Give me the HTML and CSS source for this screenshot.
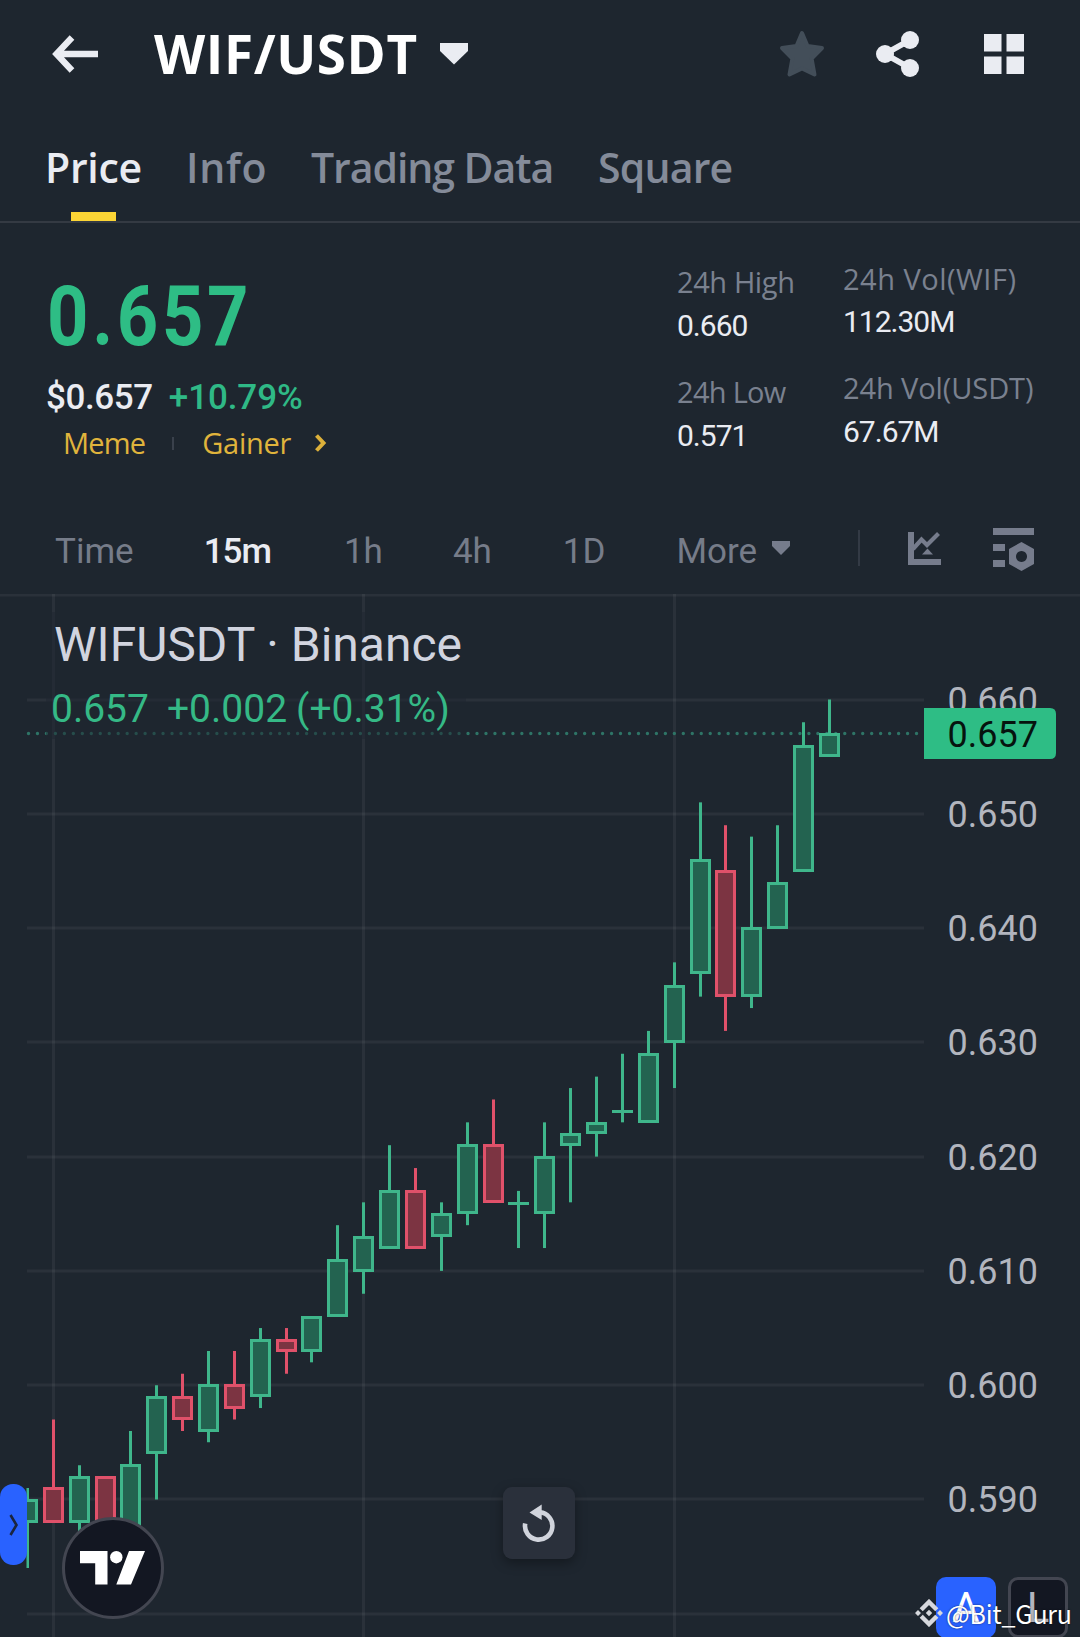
FILE: index.html
```html
<!DOCTYPE html>
<html lang="en">
<head>
  <meta charset="UTF-8"/>
  <meta name="viewport" content="width=device-width, initial-scale=1.0"/>
  <title>WIF/USDT</title>
  <link rel="stylesheet" href="styles.css">
</head>
<body>

  <header>
    <svg class="back" width="48" height="38" viewBox="0 0 48 38">
      <path d="M20 2.5 L4.5 19 L20 35.5 M4 19 H46" fill="none" stroke="#eaecf2" stroke-width="6.4"/>
    </svg>
    <h1>WIF/USDT</h1>
    <svg class="title-caret" width="28" height="22" viewBox="0 0 28 22">
      <path d="M0 0 H28 V8 L14 21.5 L0 8 Z" fill="#eaecf2"/>
    </svg>
    <div class="actions">
      <svg width="46" height="48" viewBox="0 0 46 48">
        <path d="M23 3 L28.5 16 L43 18 L32.6 28.5 L35.5 44.5 L23 38.5 L10.5 44.5 L13.4 28.5 L3 18 L17.5 16 Z" fill="#434e59" stroke="#434e59" stroke-width="4" stroke-linejoin="round"/>
      </svg>
      <svg width="43" height="48" viewBox="0 0 43 48">
        <path d="M34 10 L9 24 L34 38" fill="none" stroke="#eaecf2" stroke-width="6"/>
        <circle cx="34" cy="10" r="9" fill="#eaecf2"/>
        <circle cx="9" cy="24" r="9" fill="#eaecf2"/>
        <circle cx="34" cy="38" r="9" fill="#eaecf2"/>
      </svg>
      <svg width="40" height="40" viewBox="0 0 40 40">
        <path d="M0 0 H17.5 V17.5 H0 Z M22.5 0 H40 V17.5 H22.5 Z M0 22.5 H17.5 V40 H0 Z M22.5 22.5 H40 V40 H22.5 Z" fill="#eaecf2"/>
      </svg>
    </div>
  </header>

  <nav>
    <a class="tab active">Price</a>
    <a class="tab info">Info</a>
    <a class="tab trading">Trading Data</a>
    <a class="tab square">Square</a>
  </nav>

  <!-- Price summary -->
  <section class="summary">
    <div class="quote">
      <div class="last-price">0.657</div>
      <div class="change">
        <span class="usd">$0.657</span>
        <span class="up">+10.79%</span>
      </div>
      <div class="tags">
        <span class="meme">Meme</span>
        <i class="tag-sep"></i>
        <span class="gainer">Gainer</span>
        <svg width="12" height="18" viewBox="0 0 12 18">
          <path d="M1.5 1.5 L8.5 9 L1.5 16.5" fill="none" stroke="#dcb03a" stroke-width="4"/>
        </svg>
      </div>
    </div>
    <div class="stats range">
      <div class="label">24h High</div>
      <div class="value">0.660</div>
      <div class="label low">24h Low</div>
      <div class="value">0.571</div>
    </div>
    <div class="stats volume">
      <div class="label wif">24h Vol(WIF)</div>
      <div class="value base">112.30M</div>
      <div class="label usdt">24h Vol(USDT)</div>
      <div class="value">67.67M</div>
    </div>
  </section>

  <!-- Intervals -->
  <div class="intervals">
    <span>Time</span>
    <span class="active">15m</span>
    <span>1h</span>
    <span>4h</span>
    <span class="day">1D</span>
    <span class="more">More
      <svg width="18" height="14" viewBox="0 0 18 14"><path d="M0 0 H18 V5 L9 14 L0 5 Z" fill="#767c8c"/></svg>
    </span>
    <i class="bar"></i>
    <svg class="chart-icon" width="33" height="33" viewBox="0 0 33 33">
      <path d="M3 0 V30 H33" fill="none" stroke="#767c8c" stroke-width="6"/>
      <path d="M5 17 L13.5 7.5 L19 13 L30.5 1.5" fill="none" stroke="#767c8c" stroke-width="4.2"/>
      <path d="M19.5 16.5 L25 22.5 H14 Z" fill="#767c8c"/>
    </svg>
    <svg class="settings-icon" width="41" height="43" viewBox="0 0 41 43">
      <path d="M0 3.5 H41 M0 19.5 H12 M0 35.5 H12" stroke="#767c8c" stroke-width="7"/>
      <path d="M28.5 14 L41 21 V36 L28.5 43 L16 36 V21 Z M28.5 23 A5.5 5.5 0 1 0 28.51 23 Z" fill="#767c8c" fill-rule="evenodd"/>
    </svg>
  </div>

  <!-- Chart -->
  <div class="chart">
    <svg id="plot" width="1080" height="1043" viewBox="0 594 1080 1043"></svg>

    <div class="legend">
      <div class="symbol">WIFUSDT · Binance</div>
      <div class="legend-values">
        <span>0.657</span><span class="diff">+0.002</span><span class="pct">(+0.31%)</span>
      </div>
    </div>

    <div class="drawer">
      <svg width="10" height="22" viewBox="0 0 10 22"><path d="M1.5 1 L7.5 11 L1.5 21" fill="none" stroke="#1a2540" stroke-width="2.6"/></svg>
    </div>

    <div class="tv-logo">
      <svg width="66" height="34" viewBox="0 0 66 34">
        <path d="M0 0 H27.5 V33.5 H15.2 V12.2 H0 Z M49 0 H65 L51 33.5 H36.3 Z" fill="#fff"/>
        <circle cx="36.3" cy="6.2" r="6.2" fill="#fff"/>
      </svg>
    </div>

    <div class="reset">
      <svg width="34" height="38" viewBox="0 0 34 38">
        <path d="M3.2 19.5 A13.7 13.7 0 1 0 18 8.3" fill="none" stroke="#d1d4dc" stroke-width="4.6"/>
        <path d="M7.5 8.5 L19.7 0.5 V16 Z" fill="#d1d4dc"/>
      </svg>
    </div>

    <div class="scale-buttons">
      <div class="scale auto">A</div>
      <div class="scale log">L</div>
    </div>

    <div class="author">
      <svg width="28" height="28" viewBox="0 0 28 28">
        <path d="M6.2 10.8 L14 3 L21.8 10.8 M6.2 17.2 L14 25 L21.8 17.2" fill="none" stroke="#d6d8dd" stroke-width="4.4"/>
        <path d="M14 10.8 L17.2 14 L14 17.2 L10.8 14 Z M3 11 L6 14 L3 17 L0 14 Z M25 11 L28 14 L25 17 L22 14 Z" fill="#d6d8dd"/>
      </svg>
      <span>@Bit_Guru</span>
    </div>
  </div>

  <script>
    // [high, top of body, bottom of body, low, direction], in thousandths
    const candles = [
      [591, 590, 588, 584, 1], [597, 591, 588, 588, 0], [593, 592, 588, 587, 1], [592, 592, 588, 588, 0],
      [596, 593, 587, 587, 1], [600, 599, 594, 590, 1], [601, 599, 597, 596, 0], [603, 600, 596, 595, 1],
      [603, 600, 598, 597, 0], [605, 604, 599, 598, 1], [605, 604, 603, 601, 0], [606, 606, 603, 602, 1],
      [614, 611, 606, 606, 1], [616, 613, 610, 608, 1], [621, 617, 612, 612, 1], [619, 617, 612, 612, 0],
      [616, 615, 613, 610, 1], [623, 621, 615, 614, 1], [625, 621, 616, 616, 0], [617, 616, 616, 612, 1],
      [623, 620, 615, 612, 1], [626, 622, 621, 616, 1], [627, 623, 622, 620, 1], [629, 624, 624, 623, 1],
      [631, 629, 623, 623, 1], [637, 635, 630, 626, 1], [651, 646, 636, 634, 1], [649, 645, 634, 631, 0],
      [648, 640, 634, 633, 1], [649, 644, 640, 640, 1], [658, 656, 645, 645, 1], [660, 657, 655, 655, 1]
    ];
    const yOf = p => 699.5 + (660 - p) * 11.428;

    let svg = '<defs><clipPath id="area"><rect x="26.5" y="594" width="898" height="1043"/></clipPath></defs>';
    svg += '<rect x="0" y="594" width="1080" height="2.5" class="grid-line"/>';
    [53.5, 363.5, 674.5].forEach(x => {
      svg += `<rect x="${x - 1.5}" y="594" width="3" height="1043" class="grid-line"/>`;
    });
    for (let p = 660; p >= 580; p -= 10) {
      svg += `<rect x="27" y="${Math.round(yOf(p)) - 1.5}" width="897" height="3" class="grid-line"/>`;
    }
    svg += '<line x1="28.5" x2="924" y1="733.5" y2="733.5" class="price-line"/>';

    svg += '<g clip-path="url(#area)">';
    candles.forEach(([high, top, bottom, low, up], i) => {
      const x = Math.round(26.9 + i * 25.87) + 0.5;
      const yTop = Math.round(yOf(top) - 0.7) + 1.5;
      const yBottom = Math.max(yTop, Math.round(yOf(bottom) + 0.7) - 1.5);
      const cls = up ? 'candle-up' : 'candle-down';
      if (high > top) svg += `<line x1="${x}" x2="${x}" y1="${yOf(high)}" y2="${yTop}" class="${cls}"/>`;
      if (low < bottom) svg += `<line x1="${x}" x2="${x}" y1="${yBottom}" y2="${yOf(low)}" class="${cls}"/>`;
      if (top === bottom) {
        svg += `<line x1="${x - 10.5}" x2="${x + 10.5}" y1="${yTop}" y2="${yTop}" class="${cls}"/>`;
      } else {
        svg += `<rect x="${x - 9}" y="${yTop}" width="18" height="${yBottom - yTop}" class="${cls}"/>`;
      }
    });
    svg += '</g>';

    for (let p = 660; p >= 590; p -= 10) {
      svg += `<text x="947.5" y="${yOf(p) + 13}" class="axis">${(p / 1000).toFixed(3)}</text>`;
    }
    svg += '<path d="M924 708 H1050 Q1056 708 1056 714 V753 Q1056 759 1050 759 H924 Z" fill="#2ebd85"/>';
    svg += '<text x="947.5" y="747" class="axis current">0.657</text>';
    document.getElementById('plot').innerHTML = svg;
  </script>
</body>
</html>
```
FILE: styles.css
```css
* {
  box-sizing: border-box;
}

body {
  margin: 0;
  width: 1080px;
  height: 1637px;
  overflow: hidden;
  background: #1e262f;
  color: #eaecf2;
  font-family: "Open Sans", "Noto Sans", sans-serif;
}

svg {
  display: block;
  flex-shrink: 0;
}

header {
  display: flex;
  align-items: center;
  height: 107px;
  padding: 0 56px 0 52px;
}

h1 {
  width: 265px;
  margin: 0 0 0 54px;
  font-size: 53px;
  font-weight: 700;
  line-height: 60px;
  letter-spacing: 0.6px;
  color: #fff;
}

.title-caret {
  margin-left: 21px;
}

.actions {
  display: flex;
  align-items: center;
  margin-left: auto;
}

.actions svg + svg {
  margin-left: 51px;
}

.actions svg:last-child {
  margin-left: 65px;
}

nav {
  display: flex;
  height: 116px;
  padding: 6px 0 0 45px;
  border-bottom: 2px solid #343a43;
}

.tab {
  position: relative;
  font-size: 41px;
  font-weight: 600;
  line-height: 108px;
  color: #848b99;
}

.tab.active {
  width: 141px;
  letter-spacing: -0.3px;
  color: #eaecf2;
}

.tab.info {
  width: 125px;
  letter-spacing: 0.7px;
}

.tab.trading {
  width: 287px;
  letter-spacing: -1.05px;
}

.tab.square {
  letter-spacing: -0.8px;
}

.tab.active::after {
  content: "";
  position: absolute;
  bottom: 0;
  left: 26px;
  width: 45px;
  height: 9px;
  background: #fcd535;
}

/* Price summary */
.summary {
  display: flex;
  height: 277px;
}

.quote {
  width: 677px;
  padding: 52px 0 0 47px;
}

.last-price {
  width: 260px;
  font-family: Roboto, sans-serif;
  font-size: 84px;
  font-weight: 700;
  line-height: 84px;
  letter-spacing: 4.3px;
  color: #2ebd85;
  transform: scaleX(0.86);
  transform-origin: left;
}

.change {
  display: flex;
  gap: 16px;
  margin-top: 19px;
  font-family: Roboto, sans-serif;
  font-size: 35px;
  font-weight: 500;
  line-height: 40px;
}

.usd {
  margin-left: -1px;
  letter-spacing: -0.4px;
}

.up {
  letter-spacing: -0.1px;
  color: #2fb986;
}

.tags {
  display: flex;
  align-items: center;
  margin: 7px 0 0 16px;
  font-size: 29px;
  line-height: 36px;
  color: #e0b43c;
}

.meme {
  letter-spacing: -0.8px;
}

.tag-sep {
  width: 2px;
  height: 13px;
  margin: 0 28px 0 27px;
  background: #3a414c;
}

.gainer {
  margin-right: 24px;
  letter-spacing: -0.3px;
}

.stats {
  display: flex;
  flex-direction: column;
  line-height: 30px;
}

.range {
  width: 166px;
  padding-top: 44px;
}

.volume {
  padding-top: 41px;
}

.label {
  font-size: 29px;
  letter-spacing: -0.4px;
  color: #7a818f;
}

.label.low {
  letter-spacing: -0.7px;
}

.label.wif {
  letter-spacing: 0.5px;
}

.label.usdt {
  letter-spacing: -0.1px;
}

.value {
  margin: 14px 0 36px;
  font-family: Roboto, sans-serif;
  font-size: 30px;
  letter-spacing: -1px;
}

.value.base {
  margin-top: 13px;
}

/* Intervals */
.intervals {
  display: flex;
  align-items: center;
  gap: 70px;
  height: 94px;
  padding: 10px 0 0 55px;
  font-family: Roboto, sans-serif;
  font-size: 35px;
  line-height: 40px;
  color: #767c89;
}

.intervals .active {
  margin: 0 3px 0 0;
  font-weight: 500;
  letter-spacing: -1px;
  color: #eaecf2;
}

.day {
  margin: 0 1px;
}

.more {
  display: flex;
  align-items: center;
  gap: 15px;
}

.more svg {
  margin-top: -8px;
}

.bar {
  width: 2px;
  height: 36px;
  margin: -8px -22px 0 -2px;
  background: #333a45;
}

.chart-icon {
  margin-top: -8px;
}

.settings-icon {
  margin: -6px 0 0 -18px;
}

/* Chart */
.chart {
  position: relative;
  height: 1043px;
  font-family: Roboto, sans-serif;
}

.grid-line {
  fill: rgba(255, 255, 255, 0.055);
}

.price-line {
  stroke: #2e7466;
  stroke-width: 3.4;
  stroke-linecap: round;
  stroke-dasharray: 0 8.97;
}

.candle-up {
  fill: #236350;
  stroke: #3fb68b;
  stroke-width: 3;
}

.candle-down {
  fill: #7c3442;
  stroke: #e0516a;
  stroke-width: 3;
}

.axis {
  font-size: 36px;
  fill: #b2b5be;
}

.axis.current {
  fill: #06130e;
}

.legend {
  position: absolute;
  left: 46px;
  top: 18px;
  width: 420px;
  height: 127px;
  padding: 5px 0 0 5px;
  background: rgba(30, 38, 47, 0.5);
}

.symbol {
  padding-left: 3px;
  font-size: 48px;
  line-height: 56px;
  color: #d1d4df;
  white-space: nowrap;
}

.legend-values {
  display: flex;
  margin-top: 13px;
  font-size: 39px;
  line-height: 46px;
  color: #35b986;
}

.diff {
  margin: 0 9px 0 18px;
}

.drawer {
  position: absolute;
  left: 0;
  top: 890px;
  display: flex;
  align-items: center;
  justify-content: center;
  width: 27px;
  height: 81px;
  border-radius: 13px;
  background: #2962ff;
}

.tv-logo {
  position: absolute;
  left: 62px;
  top: 923px;
  display: flex;
  align-items: center;
  justify-content: center;
  width: 102px;
  height: 102px;
  border: 3px solid #434651;
  border-radius: 50%;
  background: #131722;
}

.reset {
  position: absolute;
  left: 503px;
  top: 893px;
  display: flex;
  align-items: center;
  justify-content: center;
  width: 72px;
  height: 72px;
  border-radius: 9px;
  background: #2a303b;
  box-shadow: 0 4px 12px rgba(0, 0, 0, 0.35);
}

.scale-buttons {
  position: absolute;
  left: 936px;
  top: 983px;
  display: flex;
  gap: 12px;
}

.scale {
  width: 60px;
  height: 61px;
  border-radius: 10px;
  font-size: 42px;
  line-height: 62px;
  text-align: center;
}

.auto {
  background: #2962ff;
  color: #fff;
}

.log {
  border: 3px solid #434651;
  background: #131722;
  color: #b2b5be;
  line-height: 56px;
}

.author {
  position: absolute;
  left: 915px;
  top: 1001px;
  display: flex;
  align-items: center;
  gap: 3px;
  font-family: "Noto Sans CJK SC", sans-serif;
  font-size: 25px;
  font-weight: 400;
  line-height: 36px;
  letter-spacing: -0.2px;
  color: #fff;
  text-shadow: 0 0 2px rgba(0, 0, 0, 0.6);
}
```
